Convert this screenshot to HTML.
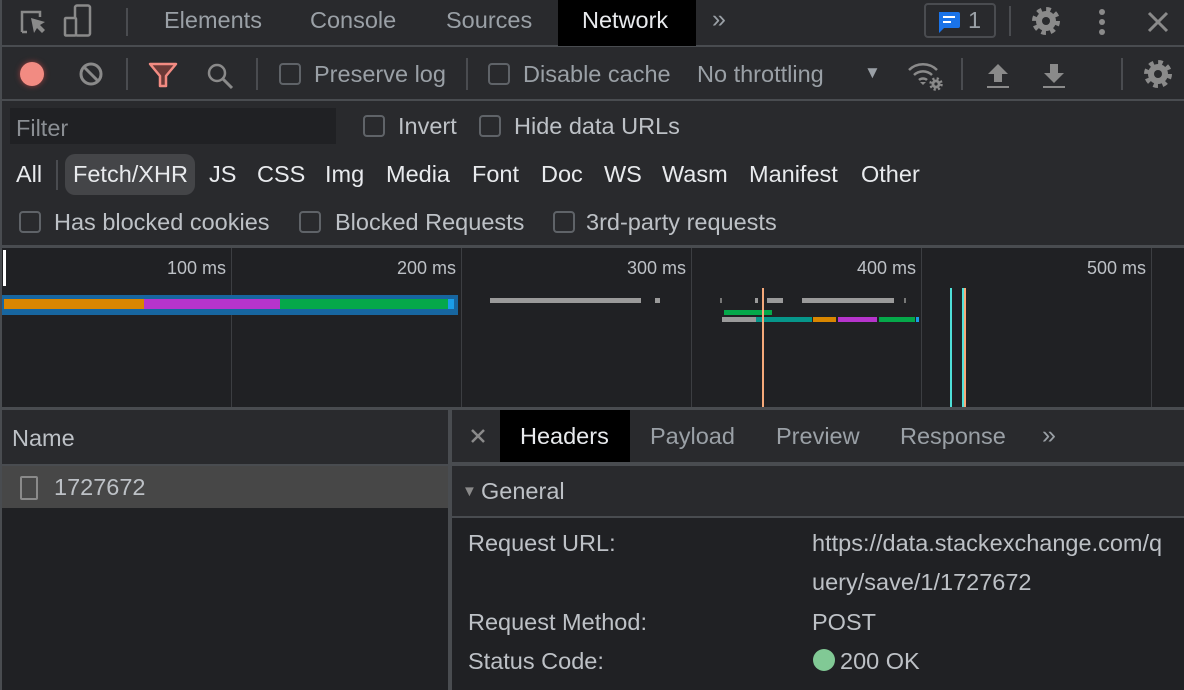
<!DOCTYPE html>
<html><head><meta charset="utf-8"><style>
*{margin:0;padding:0;box-sizing:border-box}
body{width:1184px;height:690px;overflow:hidden;background:#202124;font-family:"Liberation Sans",sans-serif;font-size:23.5px;color:#9aa0a6;position:relative}
.a{position:absolute}
.t{position:absolute;white-space:nowrap;line-height:1}
.cb{position:absolute;width:22px;height:22px;border:2px solid #5f6368;border-radius:4px;background:#292a2d}
.vs{position:absolute;width:2px;background:#4a4c50}
.w{color:#e8eaed}
.ms{position:absolute;white-space:nowrap;line-height:1;font-size:18px;color:#bdc1c6;text-align:right;width:80px}
</style></head><body>
<!-- top bar -->
<div class="a" style="left:0;top:0;width:1184px;height:46px;background:#292a2d"></div>
<div class="a" style="left:0;top:45px;width:1184px;height:2px;background:#494c50"></div>
<div class="a" style="left:0;top:0;width:2px;height:690px;background:#494c50"></div>
<svg class="a" style="left:18px;top:6px" width="34" height="34" viewBox="0 0 34 34"><path d="M4 26V6h18v5" fill="none" stroke="#8a8a8a" stroke-width="2.5"/><path d="M4 26h5" stroke="#8a8a8a" stroke-width="2.5"/><path d="M13 12l3 15 3-5 5 5 3-3-5-5 5-3z" fill="#8a8a8a"/></svg>
<svg class="a" style="left:62px;top:4px" width="34" height="34" viewBox="0 0 34 34"><rect x="13" y="1.5" width="15" height="30" rx="2" fill="none" stroke="#8a8a8a" stroke-width="2.5"/><rect x="3" y="14" width="11" height="17.5" rx="1" fill="#292a2d" stroke="#8a8a8a" stroke-width="2.5"/></svg>
<div class="vs" style="left:126px;top:8px;height:28px"></div>
<div class="t" style="left:164px;top:9px">Elements</div>
<div class="t" style="left:310px;top:9px">Console</div>
<div class="t" style="left:446px;top:9px">Sources</div>
<div class="a" style="left:558px;top:0;width:138px;height:46px;background:#000"></div>
<div class="t w" style="left:582px;top:9px">Network</div>
<div class="t" style="left:712px;top:7px;font-size:25px">»</div>
<div class="a" style="left:924px;top:3px;width:72px;height:35px;border:2px solid #4a4c50;border-radius:4px"></div>
<svg class="a" style="left:936px;top:9px" width="26" height="26" viewBox="0 0 26 26"><path d="M3 3h19a2 2 0 0 1 2 2v12a2 2 0 0 1-2 2H8l-5 5z" fill="#1a73e8"/><path d="M7 8h12M7 13h8" stroke="#fff" stroke-width="2"/></svg>
<div class="t" style="left:968px;top:9px">1</div>
<div class="vs" style="left:1009px;top:6px;height:30px"></div>
<svg class="a" style="left:1030px;top:5px" width="32" height="32" viewBox="-16 -16 32 32"><circle r="10" fill="#8a8a8a"/><circle r="11.5" fill="none" stroke="#8a8a8a" stroke-width="5" stroke-dasharray="4.5 4.5"/><circle r="4" fill="#292a2d"/></svg>
<div class="a" style="left:1099px;top:9px;width:6px;height:6px;border-radius:3px;background:#8a8a8a;box-shadow:0 10px #8a8a8a,0 20px #8a8a8a"></div>
<svg class="a" style="left:1146px;top:10px" width="24" height="24"><path d="M3 3l18 18M21 3L3 21" stroke="#8a8a8a" stroke-width="3"/></svg>
<!-- toolbar 2 -->
<div class="a" style="left:2px;top:47px;width:1182px;height:53px;background:#292a2d"></div>
<div class="a" style="left:0;top:99px;width:1184px;height:2px;background:#494c50"></div>
<div class="a" style="left:20px;top:62px;width:24px;height:24px;border-radius:12px;background:#f28b82;box-shadow:0 0 6px #a04040"></div>
<svg class="a" style="left:78px;top:61px" width="26" height="26" viewBox="0 0 26 26"><circle cx="13" cy="13" r="10" fill="none" stroke="#8a8a8a" stroke-width="3"/><path d="M6 6l14 14" stroke="#8a8a8a" stroke-width="3"/></svg>
<div class="vs" style="left:126px;top:58px;height:32px"></div>
<svg class="a" style="left:148px;top:62px" width="30" height="26" viewBox="0 0 30 26"><path d="M2 2h26L18 14v10h-6V14z" fill="#6b3a37" stroke="#f28b82" stroke-width="2.5" stroke-linejoin="round"/></svg>
<svg class="a" style="left:204px;top:60px" width="32" height="32" viewBox="0 0 32 32"><circle cx="13" cy="13" r="8" fill="none" stroke="#8a8a8a" stroke-width="2.5"/><path d="M19 19l9 9" stroke="#8a8a8a" stroke-width="3"/></svg>
<div class="vs" style="left:256px;top:58px;height:32px"></div>
<div class="cb" style="left:279px;top:63px"></div>
<div class="t" style="left:314px;top:63px">Preserve log</div>
<div class="vs" style="left:466px;top:58px;height:32px"></div>
<div class="cb" style="left:488px;top:63px"></div>
<div class="t" style="left:523px;top:63px">Disable cache</div>
<div class="t" style="left:697px;top:63px">No throttling</div>
<div class="t" style="left:864px;top:64px;font-size:17px">▼</div>
<svg class="a" style="left:906px;top:58px" width="40" height="34" viewBox="0 0 40 34"><path d="M3 12a20 20 0 0 1 28 0M8 17a13 13 0 0 1 18 0M13 22a6 6 0 0 1 8 0" fill="none" stroke="#8a8a8a" stroke-width="2.5"/><path d="M14 24l3 3 3-3z" fill="#8a8a8a"/><circle cx="30" cy="26" r="4.5" fill="#8a8a8a"/><circle cx="30" cy="26" r="5.5" fill="none" stroke="#8a8a8a" stroke-width="2.5" stroke-dasharray="2.2 2.2"/><circle cx="30" cy="26" r="1.6" fill="#292a2d"/></svg>
<div class="vs" style="left:961px;top:58px;height:32px"></div>
<svg class="a" style="left:986px;top:62px" width="24" height="26" viewBox="0 0 24 26"><path d="M12 2l10 10h-6v8H8v-8H2z" fill="#8a8a8a"/><path d="M1 25h22" stroke="#8a8a8a" stroke-width="2"/></svg>
<svg class="a" style="left:1042px;top:62px" width="24" height="26" viewBox="0 0 24 26"><path d="M12 21L2 11h6V2h8v9h6z" fill="#8a8a8a"/><path d="M1 25h22" stroke="#8a8a8a" stroke-width="2"/></svg>
<div class="vs" style="left:1121px;top:58px;height:32px"></div>
<svg class="a" style="left:1142px;top:58px" width="32" height="32" viewBox="-16 -16 32 32"><circle r="10" fill="#8a8a8a"/><circle r="11.5" fill="none" stroke="#8a8a8a" stroke-width="5" stroke-dasharray="4.5 4.5"/><circle r="4" fill="#292a2d"/></svg>
<!-- filter area -->
<div class="a" style="left:2px;top:101px;width:1182px;height:145px;background:#292a2d"></div>
<div class="a" style="left:10px;top:108px;width:326px;height:36px;background:#202124"></div>
<div class="t" style="left:16px;top:117px;color:#8a8e93">Filter</div>
<div class="cb" style="left:363px;top:115px"></div>
<div class="t" style="left:398px;top:115px;color:#bdc1c6">Invert</div>
<div class="cb" style="left:479px;top:115px"></div>
<div class="t" style="left:514px;top:115px;color:#bdc1c6">Hide data URLs</div>
<div class="t w" style="left:16px;top:163px">All</div>
<div class="vs" style="left:56px;top:160px;height:30px"></div>
<div class="a" style="left:65px;top:154px;width:130px;height:41px;border-radius:10px;background:#444548"></div>
<div class="t w" style="left:73px;top:163px">Fetch/XHR</div>
<div class="t w" style="left:209px;top:163px">JS</div>
<div class="t w" style="left:257px;top:163px">CSS</div>
<div class="t w" style="left:325px;top:163px">Img</div>
<div class="t w" style="left:386px;top:163px">Media</div>
<div class="t w" style="left:472px;top:163px">Font</div>
<div class="t w" style="left:541px;top:163px">Doc</div>
<div class="t w" style="left:604px;top:163px">WS</div>
<div class="t w" style="left:662px;top:163px">Wasm</div>
<div class="t w" style="left:749px;top:163px">Manifest</div>
<div class="t w" style="left:861px;top:163px">Other</div>
<div class="cb" style="left:19px;top:211px"></div>
<div class="t" style="left:54px;top:211px;color:#bdc1c6">Has blocked cookies</div>
<div class="cb" style="left:299px;top:211px"></div>
<div class="t" style="left:335px;top:211px;color:#bdc1c6">Blocked Requests</div>
<div class="cb" style="left:553px;top:211px"></div>
<div class="t" style="left:586px;top:211px;color:#bdc1c6">3rd-party requests</div>
<div class="a" style="left:0;top:245px;width:1184px;height:3px;background:#494c50"></div>
<!-- timeline -->
<div class="a" style="left:2px;top:248px;width:1182px;height:160px;background:#202124"></div>
<div class="vs" style="left:231px;top:248px;height:160px;width:1px;background:#3c3e42"></div>
<div class="vs" style="left:461px;top:248px;height:160px;width:1px;background:#3c3e42"></div>
<div class="vs" style="left:691px;top:248px;height:160px;width:1px;background:#3c3e42"></div>
<div class="vs" style="left:921px;top:248px;height:160px;width:1px;background:#3c3e42"></div>
<div class="vs" style="left:1151px;top:248px;height:160px;width:1px;background:#3c3e42"></div>
<div class="ms" style="left:146px;top:259px">100 ms</div>
<div class="ms" style="left:376px;top:259px">200 ms</div>
<div class="ms" style="left:606px;top:259px">300 ms</div>
<div class="ms" style="left:836px;top:259px">400 ms</div>
<div class="ms" style="left:1066px;top:259px">500 ms</div>
<div class="a" style="left:3px;top:250px;width:3px;height:36px;background:#fff"></div>
<div class="a" style="left:2px;top:295px;width:456px;height:20px;background:#1766a0"></div>
<div class="a" style="left:4px;top:299px;width:140px;height:10px;background:#d98600"></div>
<div class="a" style="left:144px;top:299px;width:136px;height:10px;background:#b634cc"></div>
<div class="a" style="left:280px;top:299px;width:168px;height:10px;background:#05a84a"></div>
<div class="a" style="left:448px;top:299px;width:6px;height:10px;background:#1a9de8"></div>
<div class="a" style="left:490px;top:298px;width:151px;height:5px;background:#9a9a9a"></div>
<div class="a" style="left:655px;top:298px;width:5px;height:5px;background:#9a9a9a"></div>
<div class="a" style="left:720px;top:298px;width:2px;height:5px;background:#777"></div>
<div class="a" style="left:755px;top:298px;width:3px;height:5px;background:#9a9a9a"></div>
<div class="a" style="left:767px;top:298px;width:16px;height:5px;background:#9a9a9a"></div>
<div class="a" style="left:802px;top:298px;width:92px;height:5px;background:#9a9a9a"></div>
<div class="a" style="left:904px;top:298px;width:2px;height:5px;background:#777"></div>
<div class="a" style="left:724px;top:310px;width:48px;height:5px;background:#05a84a"></div>
<div class="a" style="left:722px;top:317px;width:34px;height:5px;background:#9a9a9a"></div>
<div class="a" style="left:756px;top:317px;width:56px;height:5px;background:#06968a"></div>
<div class="a" style="left:813px;top:317px;width:23px;height:5px;background:#d98600"></div>
<div class="a" style="left:838px;top:317px;width:39px;height:5px;background:#b634cc"></div>
<div class="a" style="left:879px;top:317px;width:36px;height:5px;background:#05a84a"></div>
<div class="a" style="left:916px;top:317px;width:3px;height:5px;background:#1a9de8"></div>
<div class="a" style="left:762px;top:288px;width:2px;height:120px;background:#f5a97a"></div>
<div class="a" style="left:950px;top:288px;width:2px;height:120px;background:#4ee0d8"></div>
<div class="a" style="left:962px;top:288px;width:2px;height:120px;background:#4ee0d8"></div>
<div class="a" style="left:964px;top:288px;width:2px;height:120px;background:#f5a97a"></div>
<div class="a" style="left:0;top:407px;width:1184px;height:3px;background:#494c50"></div>
<!-- name panel -->
<div class="a" style="left:2px;top:410px;width:446px;height:54px;background:#292a2d"></div>
<div class="t" style="left:12px;top:427px;color:#bdc1c6">Name</div>
<div class="a" style="left:2px;top:464px;width:446px;height:2px;background:#494c50"></div>
<div class="a" style="left:2px;top:466px;width:446px;height:42px;background:#474747"></div>
<div class="a" style="left:20px;top:476px;width:18px;height:24px;border:2px solid #8a8a8a;border-radius:2px"></div>
<div class="t" style="left:54px;top:476px;color:#bdc1c6">1727672</div>
<div class="a" style="left:448px;top:410px;width:4px;height:280px;background:#494c50"></div>
<!-- details -->
<div class="a" style="left:452px;top:410px;width:732px;height:52px;background:#292a2d"></div>
<svg class="a" style="left:470px;top:428px" width="16" height="16"><path d="M2 2l12 12M14 2L2 14" stroke="#8a8a8a" stroke-width="2.5"/></svg>
<div class="a" style="left:500px;top:410px;width:130px;height:52px;background:#000"></div>
<div class="t w" style="left:520px;top:425px">Headers</div>
<div class="t" style="left:650px;top:425px">Payload</div>
<div class="t" style="left:776px;top:425px">Preview</div>
<div class="t" style="left:900px;top:425px">Response</div>
<div class="t" style="left:1042px;top:423px;font-size:25px">»</div>
<div class="a" style="left:452px;top:462px;width:732px;height:4px;background:#494c50"></div>
<div class="a" style="left:452px;top:466px;width:732px;height:50px;background:#292a2d"></div>
<div class="t" style="left:462px;top:484px;font-size:15px;color:#8a8a8a">▼</div>
<div class="t" style="left:481px;top:480px;color:#bdc1c6">General</div>
<div class="a" style="left:452px;top:516px;width:732px;height:2px;background:#494c50"></div>
<div class="t" style="left:468px;top:532px;color:#bdc1c6">Request URL:</div>
<div class="t" style="left:812px;top:532px;color:#bdc1c6">https://data.stackexchange.com/q</div>
<div class="t" style="left:812px;top:571px;color:#bdc1c6">uery/save/1/1727672</div>
<div class="t" style="left:468px;top:611px;color:#bdc1c6">Request Method:</div>
<div class="t" style="left:812px;top:611px;color:#bdc1c6">POST</div>
<div class="t" style="left:468px;top:650px;color:#bdc1c6">Status Code:</div>
<div class="a" style="left:813px;top:649px;width:22px;height:22px;border-radius:11px;background:#81c995"></div>
<div class="t" style="left:840px;top:650px;color:#bdc1c6">200 OK</div>
</body></html>
